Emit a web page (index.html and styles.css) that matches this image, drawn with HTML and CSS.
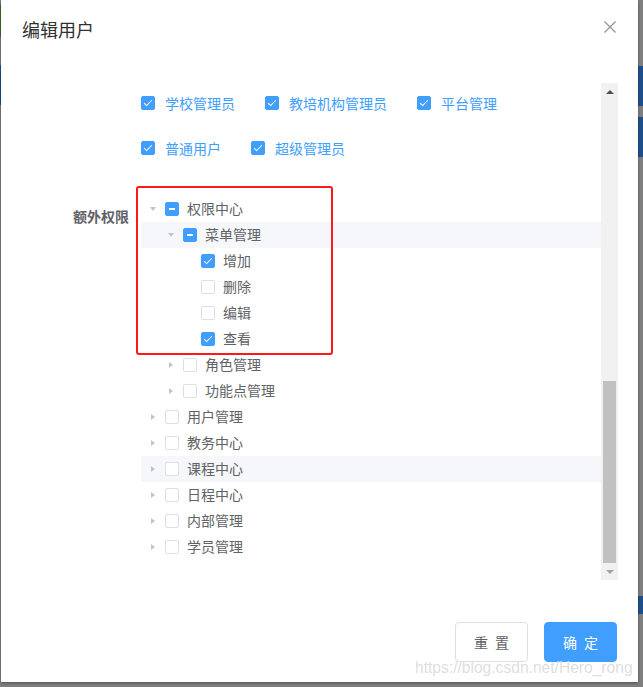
FILE: index.html
```html
<!DOCTYPE html>
<html lang="zh-CN">
<head>
<meta charset="utf-8">
<title>编辑用户</title>
<link rel="stylesheet" href="styles.css">
</head>
<body>
<div class="dialog">
  <div class="dialog-header">
    <span class="dialog-title">编辑用户</span>
    <span class="dialog-close">
      <svg width="12" height="12" viewBox="0 0 12 12"><path d="M0.5 0.5L11.5 11.5M11.5 0.5L0.5 11.5" stroke="#909399" stroke-width="1.2" fill="none"/></svg>
    </span>
  </div>
  <div class="dialog-body">
    <div class="scroll-content">
      <div class="check-row">
        <label class="checkbox is-checked"><span class="cb-box"></span><span class="cb-label">学校管理员</span></label>
        <label class="checkbox is-checked"><span class="cb-box"></span><span class="cb-label">教培机构管理员</span></label>
        <label class="checkbox is-checked"><span class="cb-box"></span><span class="cb-label">平台管理</span></label>
      </div>
      <div class="check-row second">
        <label class="checkbox is-checked"><span class="cb-box"></span><span class="cb-label">普通用户</span></label>
        <label class="checkbox is-checked"><span class="cb-box"></span><span class="cb-label">超级管理员</span></label>
      </div>
      <div class="form-item">
        <div class="form-label">额外权限</div>
        <div class="tree">
          <div class="node lv1"><span class="caret down"></span><span class="cb-box ind"></span><span class="node-label">权限中心</span></div>
          <div class="node lv2 hover"><span class="caret down"></span><span class="cb-box ind"></span><span class="node-label">菜单管理</span></div>
          <div class="node lv3"><span class="caret leaf"></span><span class="cb-box chk"></span><span class="node-label">增加</span></div>
          <div class="node lv3"><span class="caret leaf"></span><span class="cb-box"></span><span class="node-label">删除</span></div>
          <div class="node lv3"><span class="caret leaf"></span><span class="cb-box"></span><span class="node-label">编辑</span></div>
          <div class="node lv3"><span class="caret leaf"></span><span class="cb-box chk"></span><span class="node-label">查看</span></div>
          <div class="node lv2"><span class="caret right"></span><span class="cb-box"></span><span class="node-label">角色管理</span></div>
          <div class="node lv2"><span class="caret right"></span><span class="cb-box"></span><span class="node-label">功能点管理</span></div>
          <div class="node lv1"><span class="caret right"></span><span class="cb-box"></span><span class="node-label">用户管理</span></div>
          <div class="node lv1"><span class="caret right"></span><span class="cb-box"></span><span class="node-label">教务中心</span></div>
          <div class="node lv1 hover"><span class="caret right"></span><span class="cb-box"></span><span class="node-label">课程中心</span></div>
          <div class="node lv1"><span class="caret right"></span><span class="cb-box"></span><span class="node-label">日程中心</span></div>
          <div class="node lv1"><span class="caret right"></span><span class="cb-box"></span><span class="node-label">内部管理</span></div>
          <div class="node lv1"><span class="caret right"></span><span class="cb-box"></span><span class="node-label">学员管理</span></div>
        </div>
      </div>
    </div>
    <div class="scrollbar">
      <div class="sb-btn"><span class="sb-up"></span></div>
      <div class="sb-track"><div class="sb-thumb"></div></div>
      <div class="sb-btn"><span class="sb-down"></span></div>
    </div>
  </div>
  <div class="dialog-footer">
    <button class="btn btn-default">重 置</button>
    <button class="btn btn-primary">确 定</button>
  </div>
  <div class="annotation"></div>
  <div class="watermark">https://blog.csdn.net/Hero_rong</div>
</div>
</body>
</html>
```

FILE: styles.css
```css
html, body {
  margin: 0;
  padding: 0;
  height: 100%;
}
body {
  font-family: "Noto Sans CJK SC", "Noto Sans", sans-serif;
  background:
    linear-gradient(#1f4f8a, #1f4f8a) 638px 66px / 5px 40px no-repeat,
    linear-gradient(#1f4f8a, #1f4f8a) 638px 117px / 5px 40px no-repeat,
    linear-gradient(#1f4f8a, #1f4f8a) 638px 596px / 5px 18px no-repeat,
    linear-gradient(#3d6e2a, #3d6e2a) 0 5px / 1px 32px no-repeat,
    linear-gradient(#1f4f8a, #1f4f8a) 0 65px / 1px 40px no-repeat,
    #7f7f7f;
  overflow: hidden;
}
.dialog {
  position: relative;
  width: 637px;
  height: 682px;
  margin-left: 1px;
  background: #fff;
  box-shadow: 0 1px 3px rgba(0,0,0,.35);
  display: flex;
  flex-direction: column;
}
.dialog-header {
  height: 83px;
  box-sizing: border-box;
  padding: 17px 22px 0 21px;
  display: flex;
  justify-content: space-between;
  align-items: flex-start;
}
.dialog-title {
  font-size: 18px;
  line-height: 24px;
  color: #303133;
}
.dialog-close {
  display: flex;
  margin-top: 4px;
}
.dialog-body {
  height: 497px;
  margin-left: 20px;
  width: 597px;
  display: flex;
  overflow: hidden;
}
.scroll-content {
  flex: 1;
  overflow: hidden;
}
.check-row {
  height: 40px;
  display: flex;
  align-items: center;
  padding-left: 120px;
}
.check-row.second {
  margin-top: 5px;
}
.checkbox {
  display: inline-flex;
  align-items: center;
  margin-right: 30px;
  font-size: 14px;
}
.cb-box {
  position: relative;
  display: inline-block;
  width: 14px;
  height: 14px;
  box-sizing: border-box;
  border: 1px solid #dcdfe6;
  border-radius: 2px;
  background: #fff;
  flex: none;
}
.checkbox.is-checked .cb-box,
.cb-box.chk,
.cb-box.ind {
  background: #409eff;
  border-color: #409eff;
}
.checkbox.is-checked .cb-box::after,
.cb-box.chk::after {
  content: "";
  position: absolute;
  box-sizing: content-box;
  border: 1px solid #fff;
  border-left: 0;
  border-top: 0;
  width: 3px;
  height: 7px;
  left: 4px;
  top: 1px;
  transform: rotate(45deg);
}
.cb-box.ind::before {
  content: "";
  position: absolute;
  left: 3px;
  right: 3px;
  top: 5px;
  height: 2px;
  background: #fff;
}
.cb-label {
  padding-left: 10px;
  color: #409eff;
  line-height: 19px;
}
.form-item {
  margin-top: 28px;
  display: flex;
  align-items: flex-start;
}
.form-label {
  width: 120px;
  box-sizing: border-box;
  padding-right: 12px;
  text-align: right;
  line-height: 40px;
  font-size: 14px;
  font-weight: bold;
  color: #606266;
}
.tree {
  flex: 1;
}
.node {
  height: 26px;
  display: flex;
  align-items: center;
  font-size: 14px;
  color: #606266;
}
.node.hover {
  background: #f5f7fa;
}
.node.lv2 { padding-left: 18px; }
.node.lv3 { padding-left: 36px; }
.caret {
  width: 24px;
  height: 26px;
  display: flex;
  align-items: center;
  justify-content: center;
  flex: none;
}
.caret.down::before {
  content: "";
  border-left: 3.5px solid transparent;
  border-right: 3.5px solid transparent;
  border-top: 4px solid #c0c4cc;
}
.caret.right::before {
  content: "";
  border-top: 3.5px solid transparent;
  border-bottom: 3.5px solid transparent;
  border-left: 4px solid #c0c4cc;
}
.node .cb-box {
  margin-right: 8px;
}
.node-label {
  line-height: 19px;
  padding-bottom: 2px;
}
.scrollbar {
  width: 17px;
  flex: none;
  background: #f1f1f1;
  display: flex;
  flex-direction: column;
}
.sb-btn {
  height: 17px;
  display: flex;
  align-items: center;
  justify-content: center;
}
.sb-up {
  border-left: 4px solid transparent;
  border-right: 4px solid transparent;
  border-bottom: 4px solid #505050;
}
.sb-down {
  border-left: 4px solid transparent;
  border-right: 4px solid transparent;
  border-top: 4px solid #a3a3a3;
}
.sb-track {
  flex: 1;
}
.sb-thumb {
  margin: 281px 2px 0;
  height: 182px;
  background: #c1c1c1;
}
.dialog-footer {
  flex: 1;
  display: flex;
  justify-content: flex-end;
  align-items: flex-start;
  padding: 42px 21px 0 0;
  gap: 16px;
}
.btn {
  height: 40px;
  width: 73px;
  border-radius: 4px;
  font-family: "Noto Sans CJK SC", sans-serif;
  font-size: 14px;
  word-spacing: 4px;
  cursor: pointer;
  padding: 0;
}
.btn-default {
  background: #fff;
  border: 1px solid #dcdfe6;
  color: #606266;
}
.btn-primary {
  background: #409eff;
  border: 1px solid #409eff;
  color: #fff;
}
.annotation {
  position: absolute;
  left: 135px;
  top: 186px;
  width: 197px;
  height: 169px;
  box-sizing: border-box;
  border: 2px solid #ff1a1a;
  border-radius: 3px;
  pointer-events: none;
}
.watermark {
  position: absolute;
  left: 414px;
  top: 658px;
  font-family: "Liberation Sans", Arial, sans-serif;
  font-size: 15.6px;
  line-height: 20px;
  color: rgba(200,200,200,.6);
  text-shadow: 0 0 1px rgba(255,255,255,.8);
  pointer-events: none;
}
```
